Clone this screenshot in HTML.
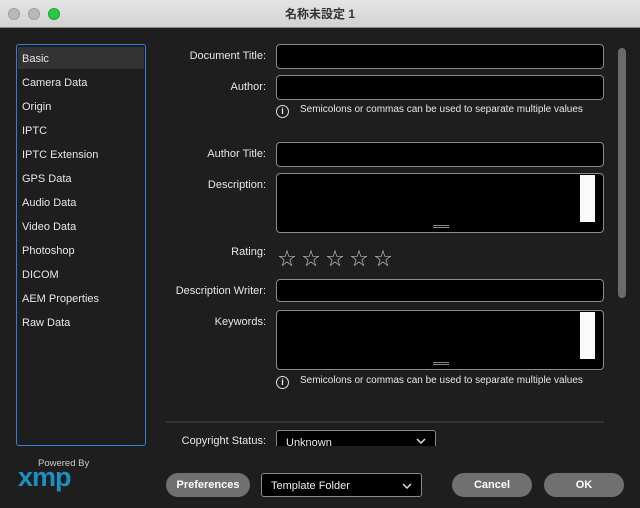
<!DOCTYPE html><html><head><style>
*{margin:0;padding:0;box-sizing:border-box}
body{width:640px;height:508px;background:#1e1e1e;font-family:"Liberation Sans","Noto Sans CJK JP",sans-serif;color:#e6e6e6;position:relative;overflow:hidden;font-size:11px}
.tb{position:absolute;left:0;top:0;width:640px;height:28px;background:linear-gradient(#e4e4e4,#d2d2d2);border-bottom:1px solid #8a8a8a;text-align:center;line-height:28px;color:#333;font-size:12px;font-weight:bold}
.dot{position:absolute;top:8px;width:12px;height:12px;border-radius:50%;background:#b8b8b8;border:1px solid #a0a0a0}
.side{position:absolute;left:16px;top:44px;width:130px;height:402px;border:1px solid #2f7fdf;border-radius:3px}
.it{position:absolute;left:5px;font-size:11px;color:#e6e6e6}
.lbl{position:absolute;right:374px;font-size:11px;color:#e6e6e6;white-space:nowrap}
.in{position:absolute;left:276px;width:328px;background:#000;border:1px solid #8a8a8a;border-radius:4px}
.note{position:absolute;left:276px;font-size:10px;color:#e6e6e6}
.note i{display:inline-block;width:13px;height:13px;border:1.5px solid #ddd;border-radius:50%;font-style:normal;font-weight:bold;font-size:9px;text-align:center;line-height:10px;margin-right:11px;vertical-align:-2px}
.sb{position:absolute;left:303px;width:15px;background:#fafafa}
.grip{position:absolute;left:156px;width:16px;height:3px;border-top:1px solid #888;border-bottom:1px solid #888}
.btn{position:absolute;top:473px;height:24px;border-radius:12px;background:#707070;color:#fff;font-weight:bold;font-size:11px;text-align:center;line-height:24px}
.sel{position:absolute;background:#000;border:1px solid #8a8a8a;border-radius:3px;font-size:11px;color:#eee;padding-left:9px}
.chev{position:absolute;right:9px;width:10px;height:6px}
</style></head><body>
<div class="tb">名称未設定 1</div>
<div class="dot" style="left:8px"></div><div class="dot" style="left:28px"></div><div class="dot" style="left:48px;background:#2ac840;border-color:#1fa833"></div>
<div class="side">
<div style="position:absolute;left:1px;top:2px;width:126px;height:22px;background:#333"></div>
<div class="it" style="top:8px">Basic</div>
<div class="it" style="top:32px">Camera Data</div>
<div class="it" style="top:56px">Origin</div>
<div class="it" style="top:80px">IPTC</div>
<div class="it" style="top:104px">IPTC Extension</div>
<div class="it" style="top:128px">GPS Data</div>
<div class="it" style="top:152px">Audio Data</div>
<div class="it" style="top:176px">Video Data</div>
<div class="it" style="top:200px">Photoshop</div>
<div class="it" style="top:224px">DICOM</div>
<div class="it" style="top:248px">AEM Properties</div>
<div class="it" style="top:272px">Raw Data</div>
</div>
<div style="position:absolute;left:38px;top:458px;font-size:9.5px;color:#ccc">Powered By</div>
<div style="position:absolute;left:18px;top:462px;font-size:27px;font-weight:bold;color:#1d8fc0;letter-spacing:-1px">xmp</div>
<div class="lbl" style="top:50px">Document Title:</div>
<div class="in" style="top:44px;height:25px"></div>
<div class="lbl" style="top:81px">Author:</div>
<div class="in" style="top:75px;height:25px"></div>
<div class="note" style="top:104px"><i>i</i>Semicolons or commas can be used to separate multiple values</div>
<div class="lbl" style="top:148px">Author Title:</div>
<div class="in" style="top:142px;height:25px"></div>
<div class="lbl" style="top:179px">Description:</div>
<div class="in" style="top:173px;height:60px"><div class="sb" style="top:1px;height:47px"></div><div class="grip" style="top:51px"></div></div>
<div class="lbl" style="top:246px">Rating:</div>
<div style="position:absolute;left:278px;top:245px;font-size:18px;color:#bbb;letter-spacing:6px">☆☆☆☆☆</div>
<div class="lbl" style="top:285px">Description Writer:</div>
<div class="in" style="top:279px;height:23px"></div>
<div class="lbl" style="top:316px">Keywords:</div>
<div class="in" style="top:310px;height:60px"><div class="sb" style="top:1px;height:47px"></div><div class="grip" style="top:51px"></div></div>
<div class="note" style="top:375px"><i>i</i>Semicolons or commas can be used to separate multiple values</div>
<div style="position:absolute;left:166px;top:421px;width:438px;height:2px;background:#333"></div>
<div class="lbl" style="top:435px">Copyright Status:</div>
<div class="sel" style="left:276px;top:430px;width:160px;height:16px;border-bottom:none;border-radius:3px 3px 0 0;line-height:24px;overflow:hidden">Unknown<svg class="chev" style="top:7px" viewBox="0 0 10 6"><path d="M1 1L5 5L9 1" stroke="#ddd" stroke-width="1.5" fill="none"/></svg></div>
<div style="position:absolute;left:618px;top:48px;width:8px;height:250px;background:#6a6a6a;border-radius:4px"></div>
<div class="btn" style="left:166px;width:84px">Preferences</div>
<div class="sel" style="left:261px;top:473px;width:161px;height:24px;line-height:24px">Template Folder<svg class="chev" style="top:9px" viewBox="0 0 10 6"><path d="M1 1L5 5L9 1" stroke="#ddd" stroke-width="1.5" fill="none"/></svg></div>
<div class="btn" style="left:452px;width:80px">Cancel</div>
<div class="btn" style="left:544px;width:80px">OK</div>
</body></html>
